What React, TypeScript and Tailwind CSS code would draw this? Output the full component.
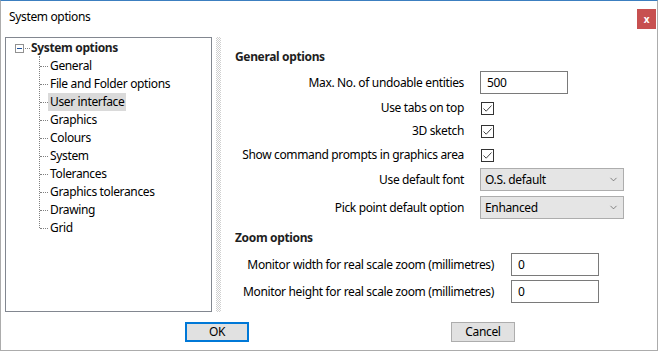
import { ChevronDown } from "lucide-react";

const treeItems = [
  "General",
  "File and Folder options",
  "User interface",
  "Graphics",
  "Colours",
  "System",
  "Tolerances",
  "Graphics tolerances",
  "Drawing",
  "Grid",
];

function CheckBox() {
  return (
    <div className="w-[13px] h-[13px] border border-[#333333] bg-white flex items-center justify-center">
      <svg width="11" height="11" viewBox="0 0 11 11">
        <path d="M1.5 5.5 L4.2 8.2 L9.5 2.5" fill="none" stroke="#444" strokeWidth="1" />
      </svg>
    </div>
  );
}

function Select({ value }: { value: string }) {
  return (
    <div className="w-[144px] h-[23px] border border-[#adadad] bg-[#e5e5e5] flex items-center justify-between pl-[4px] pr-[4px]">
      <span>{value}</span>
      <ChevronDown className="w-[11px] h-[11px] text-[#555]" strokeWidth={1.5} />
    </div>
  );
}

function TextBox({ value, w }: { value: string; w: string }) {
  return (
    <div className={`${w} h-[23px] border border-[#7a7a7a] bg-white flex items-center pl-[6px]`}>
      {value}
    </div>
  );
}

export default function App() {
  return (
    <div
      className="w-[658px] h-[351px] bg-white border-t border-t-[#3c7fc0] border-l border-r border-b border-[#acacac] text-[12px] tracking-[-0.35px] text-black flex flex-col"
      style={{ fontFamily: '"Noto Sans", "Segoe UI", sans-serif' }}
    >
      {/* Title bar */}
      <div className="h-[29px] flex items-start justify-between">
        <span className="mt-[7px] ml-[8px]">System options</span>
        <div className="mt-[8px] mr-[1px] w-[19px] h-[20px] bg-[#c75050] flex items-center justify-center text-white font-bold text-[10px] leading-none">
          x
        </div>
      </div>

      {/* Body */}
      <div className="flex mt-[7px] ml-[4px]">
        {/* Tree */}
        <div className="w-[207px] h-[275px] border border-[#828790] relative pt-[1px]">
          <div className="flex items-center h-[18px]">
            <div className="ml-[9px] w-[9px] h-[9px] border border-[#919191] flex items-center justify-center">
              <div className="w-[5px] h-[1px] bg-[#1a4f9c]" />
            </div>
            <div className="w-[5px] border-t border-dotted border-[#808080] ml-[1px]" />
            <span className="ml-[1px] font-bold text-[#1e1e1e]">System options</span>
          </div>
          <div className="absolute left-[33px] top-[18px] h-[172px] border-l border-dotted border-[#808080]" />
          {treeItems.map((item) => (
            <div key={item} className="flex items-center h-[18px]">
              <div className="ml-[34px] w-[8px] border-t border-dotted border-[#808080]" />
              <span
                className={
                  item === "User interface"
                    ? "px-[2px] h-[18px] leading-[18px] bg-[#dadada]"
                    : "px-[2px]"
                }
              >
                {item}
              </span>
            </div>
          ))}
        </div>

        {/* Splitter */}
        <div className="ml-[4px] w-[5px] h-[275px] bg-[repeating-conic-gradient(#cfcfcf_0_25%,transparent_0_50%)] bg-[length:2px_2px]" />

        {/* Options */}
        <div className="flex flex-col">
          <div className="h-[18px] mt-[11px] ml-[14px] flex items-center font-bold text-[#1e1e1e]">
            General options
          </div>

          <div className="grid grid-cols-[243px_auto] gap-x-[16px] items-center mt-[5px]">
            <div className="h-[22px] flex items-center justify-end">Max. No. of undoable entities</div>
            <TextBox value="500" w="w-[88px]" />
          </div>
          <div className="grid grid-cols-[243px_auto] gap-x-[17px] items-center mt-[3px]">
            <div className="h-[22px] flex items-center justify-end">Use tabs on top</div>
            <CheckBox />
          </div>
          <div className="grid grid-cols-[243px_auto] gap-x-[17px] items-center mt-[1px]">
            <div className="h-[22px] flex items-center justify-end">3D sketch</div>
            <CheckBox />
          </div>
          <div className="grid grid-cols-[243px_auto] gap-x-[17px] items-center mt-[2px]">
            <div className="h-[22px] flex items-center justify-end">Show command prompts in graphics area</div>
            <CheckBox />
          </div>
          <div className="grid grid-cols-[243px_auto] gap-x-[16px] items-center mt-[2px]">
            <div className="h-[22px] flex items-center justify-end">Use default font</div>
            <Select value="O.S. default" />
          </div>
          <div className="grid grid-cols-[243px_auto] gap-x-[16px] items-center mt-[5px]">
            <div className="h-[22px] flex items-center justify-end">Pick point default option</div>
            <Select value="Enhanced" />
          </div>

          <div className="h-[18px] mt-[10px] ml-[14px] flex items-center font-bold text-[#1e1e1e]">
            Zoom options
          </div>
          <div className="grid grid-cols-[273px_auto] gap-x-[17px] items-center mt-[6px]">
            <div className="h-[22px] flex items-center justify-end">Monitor width for real scale zoom (millimetres)</div>
            <TextBox value="0" w="w-[88px]" />
          </div>
          <div className="grid grid-cols-[273px_auto] gap-x-[17px] items-center mt-[4px]">
            <div className="h-[22px] flex items-center justify-end">Monitor height for real scale zoom (millimetres)</div>
            <TextBox value="0" w="w-[88px]" />
          </div>
        </div>
      </div>

      {/* Buttons */}
      <div className="flex mt-[10px] ml-[184px]">
        <button className="w-[64px] h-[20px] border-2 border-[#0078d7] bg-[#e1e1e1] flex items-center justify-center">
          OK
        </button>
        <button className="ml-[202px] w-[64px] h-[20px] border border-[#adadad] bg-[#e1e1e1] flex items-center justify-center">
          Cancel
        </button>
      </div>
    </div>
  );
}
